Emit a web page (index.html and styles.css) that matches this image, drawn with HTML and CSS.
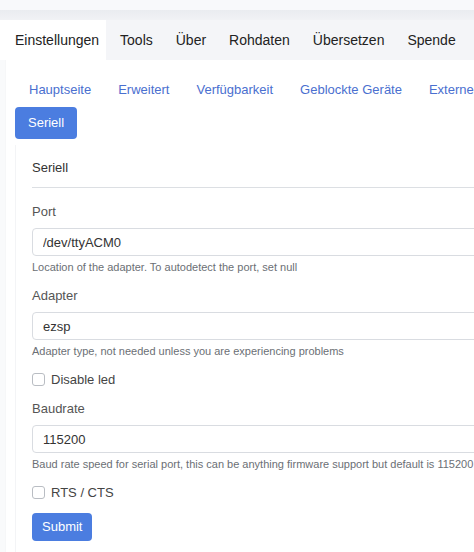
FILE: index.html
```html
<!DOCTYPE html>
<html lang="de">
<head>
<meta charset="utf-8">
<title>Einstellungen</title>
<link rel="stylesheet" href="styles.css">
</head>
<body>
<div class="page">
  <div class="top-band"></div>
  <div class="top-shadow"></div>
  <nav class="tabs">
    <a class="tab active">Einstellungen</a>
    <a class="tab">Tools</a>
    <a class="tab">Über</a>
    <a class="tab">Rohdaten</a>
    <a class="tab">Übersetzen</a>
    <a class="tab">Spende</a>
  </nav>
  <main class="main">
    <nav class="subnav">
      <div class="subnav-row">
        <a class="sublink">Hauptseite</a>
        <a class="sublink">Erweitert</a>
        <a class="sublink">Verfügbarkeit</a>
        <a class="sublink">Geblockte Geräte</a>
        <a class="sublink">Externe</a>
      </div>
      <div class="subnav-row">
        <a class="sublink pill">Seriell</a>
      </div>
    </nav>
    <section class="card">
      <h5 class="card-title">Seriell</h5>
      <form class="form">
        <div class="field">
          <label class="label">Port</label>
          <input class="input" type="text" value="/dev/ttyACM0">
          <small class="help">Location of the adapter. To autodetect the port, set null</small>
        </div>
        <div class="field">
          <label class="label">Adapter</label>
          <input class="input" type="text" value="ezsp">
          <small class="help">Adapter type, not needed unless you are experiencing problems</small>
        </div>
        <label class="check"><input type="checkbox" class="checkbox"><span>Disable led</span></label>
        <div class="field">
          <label class="label">Baudrate</label>
          <input class="input" type="text" value="115200">
          <small class="help">Baud rate speed for serial port, this can be anything firmware support but default is 115200 for Z-Stack and EZSP coordinators</small>
        </div>
        <label class="check"><input type="checkbox" class="checkbox"><span>RTS / CTS</span></label>
        <div class="actions"><button type="button" class="submit">Submit</button></div>
      </form>
    </section>
  </main>
</div>
</body>
</html>
```
FILE: styles.css
```css
html, body {
  margin: 0;
  padding: 0;
  background: #ffffff;
  overflow: hidden;
}
body {
  font-family: "Liberation Sans", Arial, Helvetica, sans-serif;
  color: #333;
}
.page {
  width: 640px;
}
.top-band {
  height: 10px;
  background: #f8f9fb;
}
.top-shadow {
  height: 10px;
  background: linear-gradient(#eaecf0, #f1f2f5);
}
.tabs {
  display: flex;
  height: 40px;
  background: #f4f5f8;
  align-items: stretch;
}
.tab {
  display: flex;
  align-items: center;
  padding: 0 11px 0 12px;
  font-size: 14px;
  color: #222;
  white-space: nowrap;
}
.tab.active {
  background: #ffffff;
  padding: 0 7px 0 15px;
}
.tab.active + .tab {
  padding-left: 14px;
}
.main {
  background: #ffffff;
  margin-left: 5px;
  border-left: 1px solid #f6f7f8;
  padding-bottom: 40px;
  box-shadow: -5px 0 0 #f9fafb;
}
.subnav {
  padding: 14px 0 0 9px;
}
.subnav-row {
  display: flex;
  flex-wrap: nowrap;
}
.subnav-row:first-child {
  margin-bottom: 1px;
}
.sublink {
  display: block;
  padding: 8px 13.5px;
  font-size: 13px;
  line-height: 16px;
  color: #4a6fcf;
  white-space: nowrap;
}
.subnav-row:first-child .sublink:first-child {
  padding-left: 14px;
}
.sublink.pill {
  background: #4b7de0;
  color: #ffffff;
  border-radius: 4px;
  padding: 8px 13px;
}
.card {
  margin: 6px 0 0 9px;
  border-left: 1px solid #f3f4f6;
  padding: 0 0 40px 16px;
}
.card-title {
  margin: 0;
  padding: 13px 0 9px;
  font-size: 13px;
  font-weight: normal;
  line-height: 20px;
  color: #333;
  border-bottom: 1px solid #dcdfe3;
}
.form {
  display: flex;
  flex-direction: column;
  gap: 12px;
  padding-top: 15px;
}
.field {
  display: flex;
  flex-direction: column;
}
.label {
  font-size: 13px;
  line-height: 18px;
  color: #555;
  margin-bottom: 7px;
}
.input {
  box-sizing: border-box;
  height: 28px;
  width: 100%;
  margin: 0;
  padding: 0 10px;
  border: 1px solid #d9dce1;
  border-radius: 4px;
  font-family: "Liberation Sans", Arial, Helvetica, sans-serif;
  font-size: 13px;
  color: #333;
  background: #fff;
  outline: none;
}
.help {
  margin-top: 4px;
  font-size: 11px;
  line-height: 15px;
  color: #6b6f75;
  white-space: nowrap;
}
.check {
  display: flex;
  align-items: center;
  height: 17px;
  gap: 6px;
  font-size: 13px;
  color: #444;
}
.checkbox {
  appearance: none;
  -webkit-appearance: none;
  box-sizing: border-box;
  width: 13px;
  height: 13px;
  margin: 0;
  border: 1px solid #b9bdc3;
  border-radius: 3px;
  background: #fff;
}
.actions {
  display: flex;
}
.submit {
  height: 28px;
  padding: 0 10px;
  border: none;
  border-radius: 4px;
  background: #4b7de0;
  color: #fff;
  font-family: "Liberation Sans", Arial, Helvetica, sans-serif;
  font-size: 13px;
  line-height: 28px;
}
```
